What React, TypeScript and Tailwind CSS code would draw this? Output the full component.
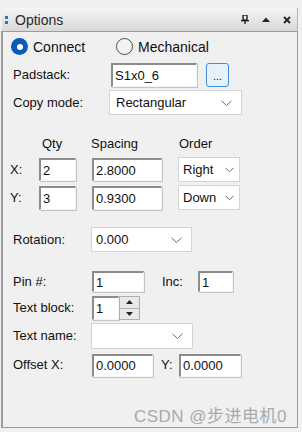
import React from 'react';

function Chevron({ small }: { small?: boolean }) {
  const w = small ? 9 : 11;
  return (
    <svg width={w} height="6" viewBox={`0 0 ${w} 6`} className="shrink-0">
      <polyline points={`0.5,0.8 ${w / 2},${small ? 4.8 : 5.5} ${w - 0.5},0.8`} fill="none" stroke="#6a6a6a" strokeWidth="1" />
    </svg>
  );
}

function SunkenInput({ value, className }: { value: string; className: string }) {
  return (
    <div
      className={`flex items-center bg-white border-t-2 border-l-2 border-t-[#8c8c8c] border-l-[#8c8c8c] border-r border-b border-r-[#f4f4f4] border-b-[#f4f4f4] shadow-[1px_1px_0_#c4c4c4] pl-[2px] text-[13px] leading-none ${className}`}
    >
      {value}
    </div>
  );
}

function Select({ value, className, small }: { value: string; className: string; small?: boolean }) {
  return (
    <div
      className={`flex items-center justify-between bg-white border border-[#d4d4d4] text-[13px] leading-none ${className}`}
    >
      <span>{value}</span>
      <Chevron small={small} />
    </div>
  );
}

function Radio({ checked, label }: { checked: boolean; label: string }) {
  return (
    <div className="flex items-center gap-[5px]">
      {checked ? (
        <div className="w-[17px] h-[17px] rounded-full bg-[#0a5cb8] flex items-center justify-center">
          <div className="w-[6px] h-[6px] rounded-full bg-white" />
        </div>
      ) : (
        <div className="w-[17px] h-[17px] rounded-full border border-[#4a4a4a] bg-[#f3f3f3]" />
      )}
      <span className="text-[14px] leading-none">{label}</span>
    </div>
  );
}

export default function App() {
  return (
    <div
      className="w-[302px] h-[432px] bg-[#f0f0f0] flex flex-col text-[#111] overflow-hidden"
      style={{ fontFamily: '"Liberation Sans", Arial, sans-serif' }}
    >
      <div className="h-[8px]" />

      {/* Title bar */}
      <div className="h-[23px] ml-[2px] w-[296px] flex items-center bg-gradient-to-b from-[#f4f4f4] to-[#d9d9d9] border-r border-[#b4b4b4]">
        <div className="flex flex-col gap-[2px] ml-[3px] mr-[7px]">
          <div className="w-[3px] h-[3px] bg-[#1e78d6]" />
          <div className="w-[3px] h-[3px] bg-[#1e78d6]" />
        </div>
        <span className="text-[14px] leading-none text-[#2a2a2a]">Options</span>
        <div className="ml-auto flex items-center gap-[13px] pr-[6px]">
          <svg width="8" height="9" viewBox="0 0 8 9">
            <rect x="2" y="0" width="4" height="5" fill="none" stroke="#222" strokeWidth="1.4" />
            <rect x="0" y="5" width="8" height="1.4" fill="#222" />
            <rect x="3.3" y="6" width="1.4" height="3" fill="#222" />
          </svg>
          <svg width="8" height="5" viewBox="0 0 8 5">
            <polygon points="0,5 4,0.5 8,5" fill="#222" />
          </svg>
          <svg width="8" height="8" viewBox="0 0 8 8">
            <path d="M1 1 L7 7 M7 1 L1 7" stroke="#222" strokeWidth="1.8" />
          </svg>
        </div>
      </div>

      {/* Panel */}
      <div className="ml-[1px] w-[297px] h-[397px] border-l-2 border-t border-r border-b border-[#9c9c9c] flex flex-col">
        <div className="mt-[6px] pl-[8px] flex items-center h-[17px]">
          <div className="w-[105px]">
            <Radio checked label="Connect" />
          </div>
          <Radio checked={false} label="Mechanical" />
        </div>

        <div className="mt-[8px] pl-[10px] flex items-center h-[24px]">
          <span className="w-[98px] text-[13px]">Padstack:</span>
          <SunkenInput value="S1x0_6" className="w-[86px] h-[24px]" />
          <div className="ml-[9px] w-[23px] h-[24px] rounded-[3px] border border-[#3e8ee0] bg-[#e5f1fb] flex items-end justify-center pb-[4px] text-[11px] leading-none">
            ...
          </div>
        </div>

        <div className="mt-[3px] pl-[10px] flex items-center h-[25px]">
          <span className="w-[96px] text-[13px]">Copy mode:</span>
          <Select value="Rectangular" className="w-[133px] h-[25px] pl-[6px] pr-[9px]" />
        </div>

        <div className="mt-[21px] pl-[7px] flex items-center h-[16px] text-[13px]">
          <span className="w-[32px]" />
          <span className="w-[49px]">Qty</span>
          <span className="w-[88px]">Spacing</span>
          <span>Order</span>
        </div>

        <div className="mt-[5px] pl-[7px] flex items-center h-[25px] text-[13px]">
          <span className="w-[29px]">X:</span>
          <SunkenInput value="2" className="w-[37px] h-[23px]" />
          <SunkenInput value="2.8000" className="ml-[16px] w-[70px] h-[23px]" />
          <Select small value="Right" className="ml-[16px] w-[62px] h-[25px] pl-[4px] pr-[5px]" />
        </div>

        <div className="mt-[3px] pl-[7px] flex items-center h-[25px] text-[13px]">
          <span className="w-[29px]">Y:</span>
          <SunkenInput value="3" className="w-[37px] h-[24px]" />
          <SunkenInput value="0.9300" className="ml-[16px] w-[70px] h-[24px]" />
          <Select small value="Down" className="ml-[16px] w-[62px] h-[25px] pl-[4px] pr-[5px]" />
        </div>

        <div className="mt-[17px] pl-[10px] flex items-center h-[25px]">
          <span className="w-[78px] text-[13px]">Rotation:</span>
          <Select value="0.000" className="w-[101px] h-[25px] pl-[4px] pr-[9px]" />
        </div>

        <div className="mt-[18px] pl-[10px] flex items-center h-[23px] text-[13px]">
          <span className="w-[79px]">Pin #:</span>
          <SunkenInput value="1" className="w-[52px] h-[21px]" />
          <span className="ml-[18px] w-[36px]">Inc:</span>
          <SunkenInput value="1" className="w-[35px] h-[21px]" />
        </div>

        <div className="mt-[3px] pl-[10px] flex items-center h-[24px] text-[13px]">
          <span className="w-[79px]">Text block:</span>
          <SunkenInput value="1" className="w-[27px] h-[24px]" />
          <div className="w-[21px] h-[24px] flex flex-col border border-[#b0b0b0] bg-[#e9e9e9]">
            <div className="flex-1 flex items-center justify-center border-b border-[#b0b0b0]">
              <svg width="7" height="4" viewBox="0 0 7 4"><polygon points="0,4 3.5,0 7,4" fill="#222" /></svg>
            </div>
            <div className="flex-1 flex items-center justify-center">
              <svg width="7" height="4" viewBox="0 0 7 4"><polygon points="0,0 3.5,4 7,0" fill="#222" /></svg>
            </div>
          </div>
        </div>

        <div className="mt-[3px] pl-[10px] flex items-center h-[26px]">
          <span className="w-[78px] text-[13px]">Text name:</span>
          <Select value="" className="w-[102px] h-[26px] pl-[6px] pr-[9px]" />
        </div>

        <div className="mt-[4px] pl-[10px] flex items-center h-[24px] text-[13px]">
          <span className="w-[79px]">Offset X:</span>
          <SunkenInput value="0.0000" className="w-[61px] h-[23px]" />
          <span className="ml-[8px] w-[18px]">Y:</span>
          <SunkenInput value="0.0000" className="w-[62px] h-[23px]" />
        </div>

        <div className="flex-1 flex items-end justify-end pr-[10px] pb-[2px]">
          <span
            className="text-[17px] leading-none text-[#a9a9a9] tracking-[0.5px]"
            style={{ fontFamily: '"Liberation Sans", "Noto Sans CJK SC", sans-serif' }}
          >
            CSDN @步进电机0
          </span>
        </div>
      </div>
    </div>
  );
}
